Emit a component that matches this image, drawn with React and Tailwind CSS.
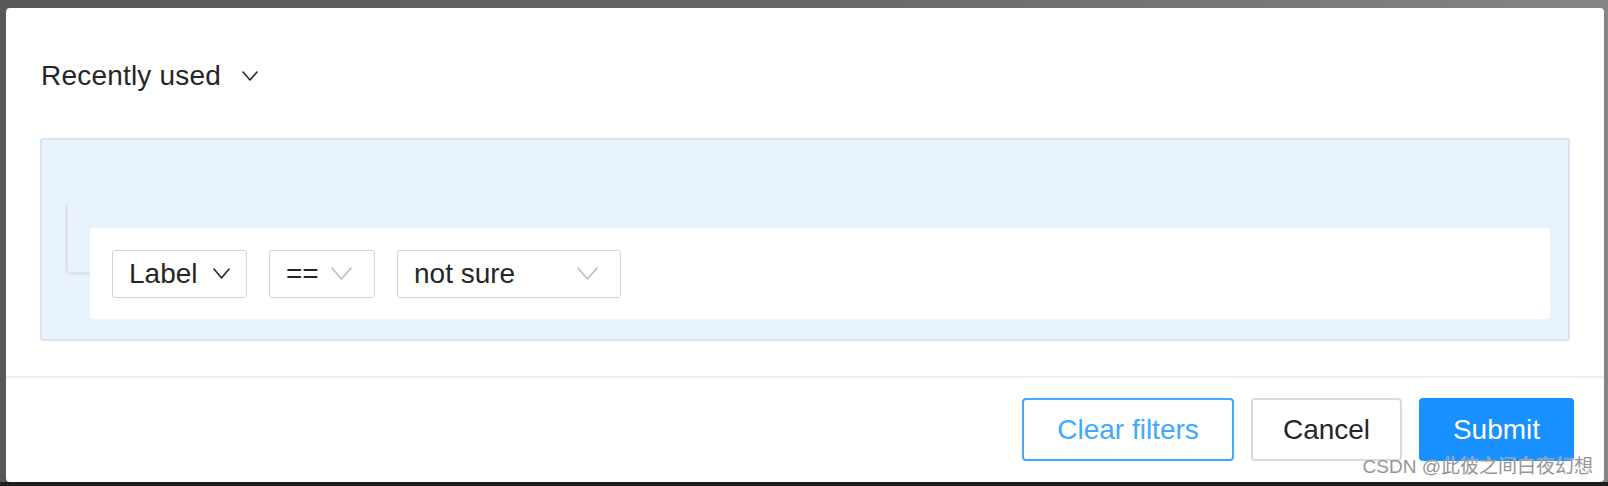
import React from "react";

const font = "font-['Liberation_Sans',Arial,sans-serif]";

function Chevron({ className, color = "#262626", w = 16, h = 10 }) {
    return (
        <svg className={className} width={w} height={h} viewBox={`0 0 ${w} ${h}`} fill="none">
            <polyline points={`1,1 ${w / 2},${h - 1} ${w - 1},1`} stroke={color} strokeWidth="1.6" strokeLinecap="round" strokeLinejoin="round" />
        </svg>
    );
}

function SelectBox({ label, width, dark, padRight }) {
    return (
        <div className={"flex h-[48px] items-center justify-between rounded-[3px] border border-[#d4d4d4] bg-white pl-[16px] " + width + " " + padRight}>
            <span className="text-[28px] leading-none text-[#262626]">{label}</span>
            {dark ? <Chevron color="#262626" w={17} h={11} /> : <Chevron color="#bdbdbd" w={21} h={13} />}
        </div>
    );
}

function FilterRow() {
    return (
        <div className="mt-[88px] flex h-[91px] flex-1 items-center gap-[22px] rounded-[4px] bg-white pl-[22px]">
            <SelectBox label="Label" width="w-[135px]" padRight="pr-[16px]" dark />
            <SelectBox label="==" width="w-[106px]" padRight="pr-[22px]" />
            <SelectBox label="not sure" width="w-[224px]" padRight="pr-[22px]" />
        </div>
    );
}

export default function App() {
    return (
        <div className={"relative flex h-[486px] w-[1608px] flex-col overflow-hidden bg-[linear-gradient(to_right,#585858,#676767_50%,#858585)] pt-[8px] " + font}>
            <div className="ml-[6px] mr-[4px] flex h-[474px] flex-col rounded-[4px] bg-white">
                <div className="flex items-center gap-[21px] pl-[35px] pt-[48px]">
                    <span className="text-[28px] leading-[40px] tracking-[0.2px] text-[#262626]">Recently used</span>
                    <Chevron color="#262626" w={16} h={10} />
                </div>

                <div className="mx-[34px] mt-[42px] flex h-[203px] items-start rounded-[3px] border-2 border-[#d7e4f0] bg-[#e9f3fd] pl-[23px] pr-[18px]">
                    <div className="mt-[65px] h-[70px] w-[25px] shrink-0 rounded-bl-[6px] border-b-[3px] border-l-[3px] border-[#dce5ee]" />
                    <FilterRow />
                </div>

                <div className="mt-[35px] h-[2px] bg-[#eeeeee]" />

                <div className="flex justify-end gap-[17px] pr-[30px] pt-[20px]">
                    <button className="h-[63px] w-[212px] rounded-[4px] border-2 border-[#40a9ff] bg-white text-[28px] text-[#40a9ff]">
                        Clear filters
                    </button>
                    <button className="h-[63px] w-[151px] rounded-[4px] border-2 border-[#dadada] bg-white text-[28px] text-[#262626]">
                        Cancel
                    </button>
                    <button className="h-[63px] w-[155px] rounded-[4px] bg-[#1890ff] text-[28px] text-white">
                        Submit
                    </button>
                </div>
            </div>
            <div className="mt-auto h-[4px] bg-[#1e1e1e]" />

            <span className="absolute bottom-[10px] right-[15px] font-['Liberation_Sans','Noto_Sans_CJK_SC',sans-serif] text-[19px] leading-none text-[#959595] [text-shadow:0_0_1px_#ffffff]">
                CSDN @此彼之间白夜幻想
            </span>
        </div>
    );
}
